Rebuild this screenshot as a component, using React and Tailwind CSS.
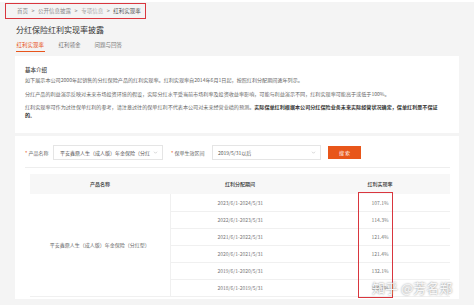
import React from 'react'

const rows = [
  ['2023/6/1-2024/5/31', '107.1%'],
  ['2022/6/1-2023/5/31', '114.3%'],
  ['2021/6/1-2022/5/31', '121.4%'],
  ['2020/6/1-2021/5/31', '121.4%'],
  ['2019/6/1-2020/5/31', '132.1%'],
  ['2018/6/1-2019/5/31', '160.7%'],
]

function Chevron() {
  return (
    <svg width="5" height="5" viewBox="0 0 10 10" className="ml-auto">
      <path d="M2 3.5 L5 6.5 L8 3.5" fill="none" stroke="#bbb" strokeWidth="1.2" />
    </svg>
  )
}

export default function App() {
  return (
    <div className="relative w-[474px] h-[305px] overflow-hidden bg-[#f4f4f4] font-['Noto_Sans_CJK_SC','Noto_Sans',sans-serif] text-[#666]">
      <div className="h-[2px] bg-white" />
      {/* breadcrumb */}
      <div className="ml-[5px] mt-[1px] w-[141px] h-[16px] border-[1.5px] border-[#d9363e] flex items-center pl-[11px] gap-[3.5px] text-[5.5px] text-[#888]">
        <span>首页</span><span>&gt;</span>
        <span>公开信息披露</span><span>&gt;</span>
        <span className="text-[#aaa]">专项信息</span><span>&gt;</span>
        <span className="text-[#555]">红利实现率</span>
      </div>

      <div className="mt-[5px] pl-[16px] text-[8px] leading-[12px] text-[#333]">分红保险红利实现率披露</div>

      <div className="mt-[4px] pl-[16px] flex gap-[14px] text-[5.5px] leading-[11px]">
        <span className="text-[#e8551b] border-b-[1.5px] border-[#e8551b] px-[0.5px]">红利实现率</span>
        <span className="text-[#777]">红利领金</span>
        <span className="text-[#777]">问题与回答</span>
      </div>

      {/* card 1 */}
      <div className="mt-[4px] mx-[15px] h-[77px] bg-white px-[10px] pt-[10px] text-[5.1px] leading-[8px] whitespace-nowrap">
        <div className="text-[5.5px] font-medium text-[#444]">基本介绍</div>
        <p className="mt-[2px]">如下展示本公司2000年起销售的分红保险产品的红利实现率。红利实现率自2014年6月1日起，按照红利分配期间逐年列示。</p>
        <p className="mt-[6px]">分红产品的利益演示反映对未来市场投资环境的假设，实际分红水平受当前市场利率及投资收益率影响，可能与利益演示不同，红利实现率可能高于或低于100%。</p>
        <p className="mt-[5px] leading-[7.5px]">
          红利实现率可作为过往保单红利的参考，请注意过往的保单红利不代表本公司对未来经营业绩的预测。
          <span className="font-bold text-[#333]">实际保单红利根据本公司分红保险业务未来实际经营状况确定，保单红利是不保证</span>
          <br />
          <span className="font-bold text-[#222]">的。</span>
        </p>
      </div>

      {/* card 2 */}
      <div className="mt-[3px] mx-[15px] h-[163px] bg-white pt-[9px]">
        <div className="flex items-center pl-[10px] text-[5px]">
          <span className="w-[28px]"><span className="text-[#e8551b]">* </span>产品名称</span>
          <div className="w-[110px] h-[15px] border border-[#e5e5e5] flex items-center pl-[6px] pr-[4px] text-[#555]">
            <span>平安鑫鼎人生（成人版）年金保险（分红</span>
            <Chevron />
          </div>
          <span className="ml-[8px] w-[41px]"><span className="text-[#e8551b]">* </span>保单生效区间</span>
          <div className="w-[109px] h-[15px] border border-[#e5e5e5] flex items-center pl-[5px] pr-[4px] text-[#555]">
            <span>2019/5/31以后</span>
            <Chevron />
          </div>
          <button className="ml-[7px] w-[33px] h-[13px] bg-[#e8561a] text-white text-[5px] flex items-center justify-center">搜 索</button>
        </div>

        <div className="mt-[7px] ml-[10px] mr-[9px] border-t border-[#eeeeee]" />

        <div className="relative mt-[6px] ml-[15px] mr-[9px]">
          <table className="w-full table-fixed border-collapse text-[5px]">
            <thead>
              <tr className="h-[20px] bg-[#f7f7f7] text-[#333]">
                <th className="font-medium">产品名称</th>
                <th className="font-medium">红利分配期间</th>
                <th className="font-medium">红利实现率</th>
              </tr>
            </thead>
            <tbody>
              {rows.map(([p, r], i) => (
                <tr key={p} className="h-[17px] border-b border-[#f0f0f0]">
                  {i === 0 && (
                    <td rowSpan={6} className="text-center border-r border-[#f0f0f0] text-[#666]">平安鑫鼎人生（成人版）年金保险（分红型）</td>
                  )}
                  <td className="text-center text-[#777]">{p}</td>
                  <td className="text-center text-[#777]">{r}</td>
                </tr>
              ))}
            </tbody>
          </table>
          <div className="absolute left-[328px] top-[18px] w-[35px] h-[106px] border-[1.5px] border-[#d9363e]" />
        </div>
      </div>

      <div className="absolute left-[372px] top-[279px] text-[13px] leading-[18px] text-white/90 [text-shadow:0_0_2px_rgba(0,0,0,0.55)] whitespace-nowrap">知乎 @芳名郑</div>
    </div>
  )
}
